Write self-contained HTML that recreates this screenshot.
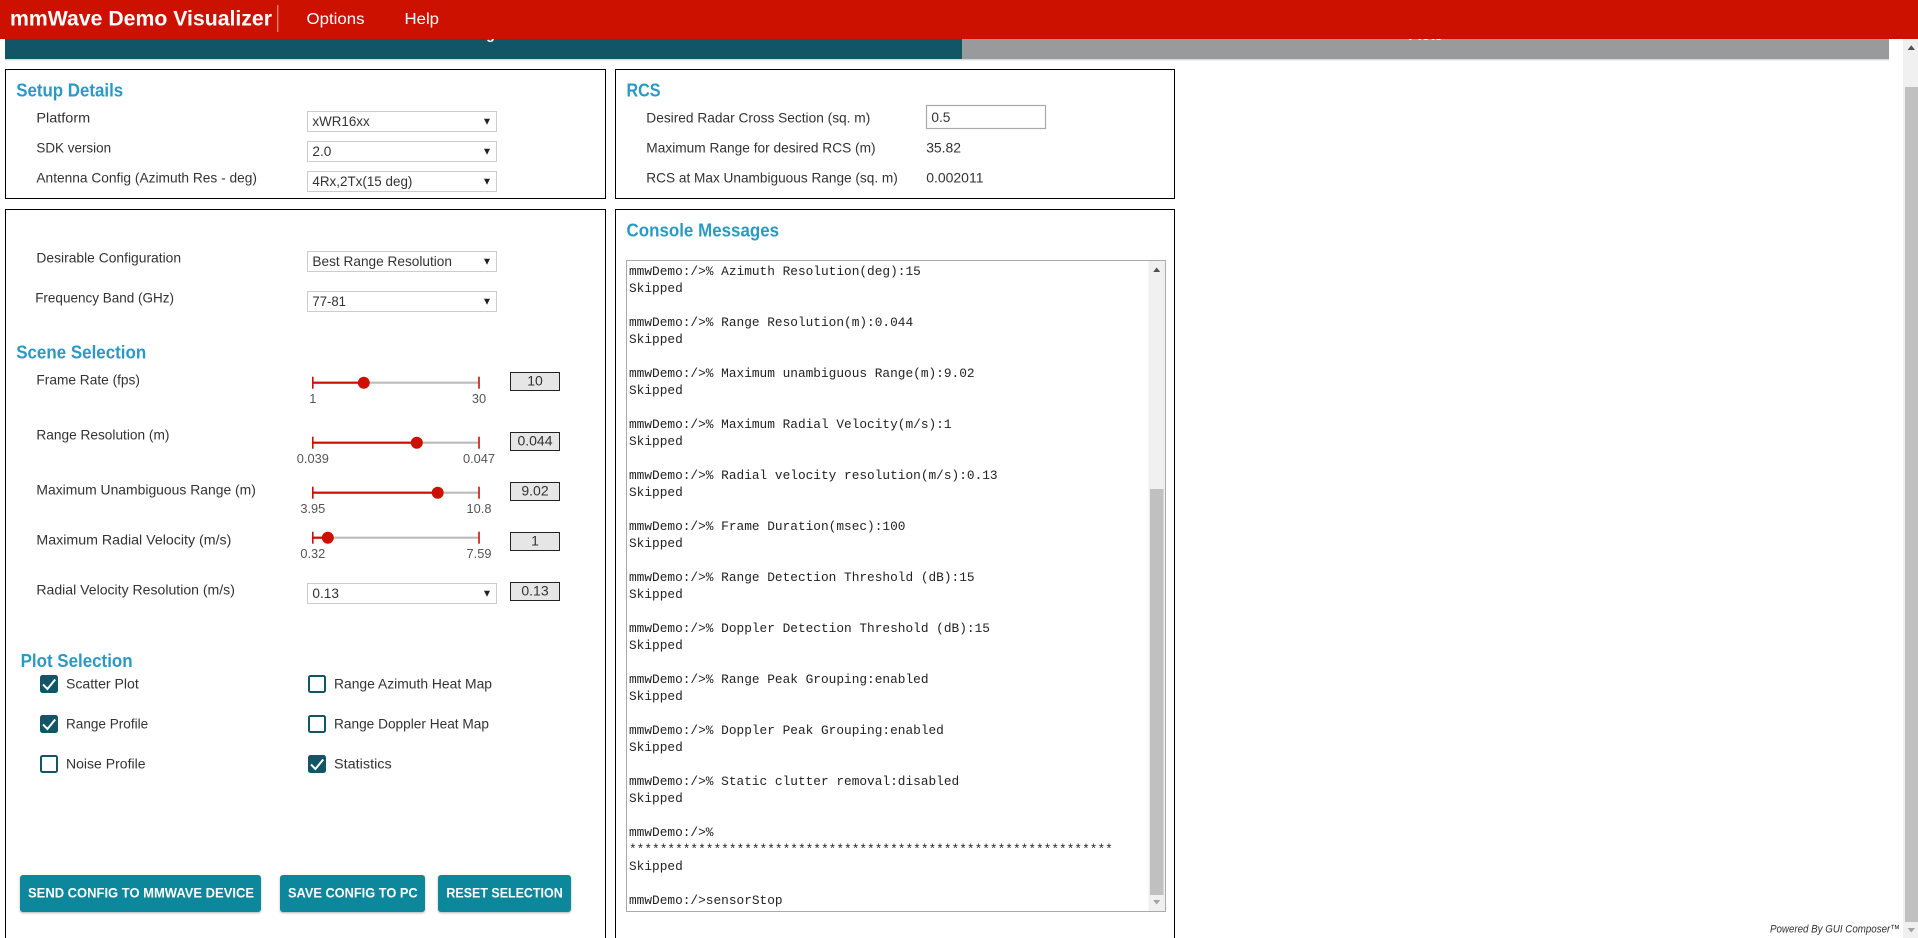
<!DOCTYPE html>
<html lang="en">
<head>
<meta charset="utf-8">
<title>mmWave Demo Visualizer</title>
<style>
html,body{margin:0;padding:0;background:#fff;width:1918px;height:938px;overflow:hidden}
svg{display:block;position:absolute;left:0;top:0}
text{font-family:"Liberation Sans",Arial,sans-serif;fill:#333}
.l{font-size:14px;transform:translateY(-1px)}
.o{font-size:14px}
.h{font-size:18px;font-weight:bold;fill:#2a9ac4}
.t{font-size:12.8px;fill:#555;text-anchor:middle;transform:translateY(-1px)}
.v{font-size:14px;text-anchor:middle}
.m{font-family:"Liberation Mono",monospace;font-size:12.8px;fill:#222;transform:translateY(-1px)}
.b{font-size:14px;font-weight:bold;fill:#fff}
.bt{font-size:14px;font-weight:bold;fill:#fff;transform:translateY(-1px)}
.s{fill:#fff;stroke:#ccc;stroke-width:1}
.p{fill:none;stroke:#000;stroke-width:1}
.vb{fill:#e6e6e6;stroke:#222;stroke-width:1}
.a{fill:#222;transform:translateY(.7px)}
.red{stroke:#cc1100;stroke-width:2.2}
.gr{stroke:#bbb;stroke-width:2.2}
.tk{stroke:#cc1100;stroke-width:1.6}
.cb{fill:#fff;stroke:#115566;stroke-width:2}
.cf{fill:#115566;stroke:#115566;stroke-width:2}
.ck{fill:none;stroke:#fff;stroke-width:2}
.btn{fill:#07879b}
</style>
</head>
<body>
<svg width="1918" height="938" viewBox="0 0 1918 938" xmlns="http://www.w3.org/2000/svg">
<defs>
<filter id="sh" x="-5%" y="-10%" width="110%" height="130%"><feDropShadow dx="0" dy="1" stdDeviation="1" flood-color="#000" flood-opacity="0.3"/></filter>
</defs>

<!-- tabs -->
<rect x="5" y="59" width="1884" height="1.5" fill="#dcdcdc"/>
<rect x="5" y="39" width="957" height="20" fill="#115566"/>
<rect x="962" y="39" width="927" height="20" fill="#999a9b"/>
<text x="483.5" y="39" class="b" text-anchor="middle">Configure</text>
<text x="1425.5" y="40" class="b" text-anchor="middle">Plots</text>

<!-- header -->
<rect x="0" y="0" width="1918" height="39" fill="#cc1100"/>
<text x="10" y="25.3" font-size="21" font-weight="bold" style="fill:#fff" textLength="262" lengthAdjust="spacingAndGlyphs">mmWave Demo Visualizer</text>
<rect x="277.3" y="5" width="1" height="27" fill="#e8a8a0"/>
<text x="306.5" y="24" font-size="16" style="fill:#fff" textLength="58" lengthAdjust="spacingAndGlyphs">Options</text>
<text x="404.5" y="24" font-size="16" style="fill:#fff" textLength="34.5" lengthAdjust="spacingAndGlyphs">Help</text>

<!-- page scrollbar -->
<rect x="1903" y="39" width="15" height="899" fill="#f0f0f0"/>
<rect x="1905" y="87" width="13" height="835" fill="#c0c0c0"/>
<polygon points="1911.3,45.3 1915,50 1907.6,50" fill="#505050"/>
<polygon points="1907.6,928 1915,928 1911.3,932.5" fill="#a3a3a3"/>
<text x="1770" y="932.3" font-size="11" font-style="italic" textLength="130" lengthAdjust="spacingAndGlyphs">Powered By GUI Composer™</text>

<!-- panels -->
<rect class="p" x="5.5" y="69.5" width="600" height="129"/>
<rect class="p" x="5.5" y="209.5" width="600" height="760"/>
<rect class="p" x="615.5" y="69.5" width="559" height="129"/>
<rect class="p" x="615.5" y="209.5" width="559" height="760"/>

<!-- setup details -->
<text class="h" x="16.2" y="96.3" textLength="107" lengthAdjust="spacingAndGlyphs">Setup Details</text>
<text class="l" x="36.4" y="123.3" textLength="53.8" lengthAdjust="spacingAndGlyphs">Platform</text>
<text class="l" x="36.4" y="153.3" textLength="74.7" lengthAdjust="spacingAndGlyphs">SDK version</text>
<text class="l" x="36.4" y="183.3" textLength="220.6" lengthAdjust="spacingAndGlyphs">Antenna Config (Azimuth Res - deg)</text>

<rect class="s" x="307.5" y="111.5" width="189" height="20"/>
<text class="o" x="312.4" y="126" textLength="57.3" lengthAdjust="spacingAndGlyphs">xWR16xx</text>
<polygon class="a" points="484,118 490,118 487,124"/>

<rect class="s" x="307.5" y="141.5" width="189" height="20"/>
<text class="o" x="312.4" y="156" textLength="19" lengthAdjust="spacingAndGlyphs">2.0</text>
<polygon class="a" points="484,148 490,148 487,154"/>

<rect class="s" x="307.5" y="171.5" width="189" height="20"/>
<text class="o" x="312.4" y="186" textLength="100" lengthAdjust="spacingAndGlyphs">4Rx,2Tx(15 deg)</text>
<polygon class="a" points="484,178 490,178 487,184"/>

<!-- config -->
<text class="l" x="36.4" y="263.3" textLength="144.7" lengthAdjust="spacingAndGlyphs">Desirable Configuration</text>
<rect class="s" x="307.5" y="251.5" width="189" height="20"/>
<text class="o" x="312.4" y="266" textLength="139.6" lengthAdjust="spacingAndGlyphs">Best Range Resolution</text>
<polygon class="a" points="484,258 490,258 487,264"/>

<text class="l" x="35.2" y="303.3" textLength="138.8" lengthAdjust="spacingAndGlyphs">Frequency Band (GHz)</text>
<rect class="s" x="307.5" y="291.5" width="189" height="20"/>
<text class="o" x="312.4" y="306" textLength="33.6" lengthAdjust="spacingAndGlyphs">77-81</text>
<polygon class="a" points="484,298 490,298 487,304"/>

<!-- scene selection -->
<text class="h" x="16.2" y="358.3" textLength="130" lengthAdjust="spacingAndGlyphs">Scene Selection</text>

<text class="l" x="36.4" y="385.3" textLength="103.6" lengthAdjust="spacingAndGlyphs">Frame Rate (fps)</text>
<line class="gr" x1="312.4" y1="382.7" x2="479.2" y2="382.7"/>
<line class="red" x1="312.4" y1="382.7" x2="363.8" y2="382.7"/>
<line class="tk" x1="312.8" y1="376.7" x2="312.8" y2="388.7"/>
<line class="tk" x1="479" y1="376.7" x2="479" y2="388.7"/>
<circle cx="363.8" cy="382.7" r="6" fill="#cc1100"/>
<text class="t" x="312.8" y="404">1</text>
<text class="t" x="479" y="404">30</text>
<rect class="vb" x="510.5" y="372.5" width="49" height="18"/>
<text class="v" x="535" y="385.7">10</text>

<text class="l" x="36.4" y="440.3" textLength="133" lengthAdjust="spacingAndGlyphs">Range Resolution (m)</text>
<line class="gr" x1="312.4" y1="442.7" x2="479.2" y2="442.7"/>
<line class="red" x1="312.4" y1="442.7" x2="416.8" y2="442.7"/>
<line class="tk" x1="312.8" y1="436.7" x2="312.8" y2="448.7"/>
<line class="tk" x1="479" y1="436.7" x2="479" y2="448.7"/>
<circle cx="416.8" cy="442.7" r="6" fill="#cc1100"/>
<text class="t" x="312.8" y="464">0.039</text>
<text class="t" x="479" y="464">0.047</text>
<rect class="vb" x="510.5" y="432.5" width="49" height="18"/>
<text class="v" x="535" y="445.7">0.044</text>

<text class="l" x="36.4" y="495.3" textLength="219.5" lengthAdjust="spacingAndGlyphs">Maximum Unambiguous Range (m)</text>
<line class="gr" x1="312.4" y1="492.7" x2="479.2" y2="492.7"/>
<line class="red" x1="312.4" y1="492.7" x2="437.7" y2="492.7"/>
<line class="tk" x1="312.8" y1="486.7" x2="312.8" y2="498.7"/>
<line class="tk" x1="479" y1="486.7" x2="479" y2="498.7"/>
<circle cx="437.7" cy="492.7" r="6" fill="#cc1100"/>
<text class="t" x="312.8" y="514">3.95</text>
<text class="t" x="479" y="514">10.8</text>
<rect class="vb" x="510.5" y="482.5" width="49" height="18"/>
<text class="v" x="535" y="495.7">9.02</text>

<text class="l" x="36.4" y="545.3" textLength="195" lengthAdjust="spacingAndGlyphs">Maximum Radial Velocity (m/s)</text>
<line class="gr" x1="312.4" y1="537.7" x2="479.2" y2="537.7"/>
<line class="red" x1="312.4" y1="537.7" x2="327.8" y2="537.7"/>
<line class="tk" x1="312.8" y1="531.7" x2="312.8" y2="543.7"/>
<line class="tk" x1="479" y1="531.7" x2="479" y2="543.7"/>
<circle cx="327.8" cy="537.7" r="6" fill="#cc1100"/>
<text class="t" x="312.8" y="559">0.32</text>
<text class="t" x="479" y="559">7.59</text>
<rect class="vb" x="510.5" y="532.5" width="49" height="18"/>
<text class="v" x="535" y="545.7">1</text>

<text class="l" x="36.4" y="595.3" textLength="198.5" lengthAdjust="spacingAndGlyphs">Radial Velocity Resolution (m/s)</text>
<rect class="s" x="307.5" y="583.5" width="189" height="20"/>
<text class="o" x="312.4" y="598" textLength="26.5" lengthAdjust="spacingAndGlyphs">0.13</text>
<polygon class="a" points="484,590 490,590 487,596"/>
<rect class="vb" x="510.5" y="582.5" width="49" height="18"/>
<text class="v" x="535" y="595.7">0.13</text>

<!-- plot selection -->
<text class="h" x="20.6" y="667" textLength="112" lengthAdjust="spacingAndGlyphs">Plot Selection</text>

<rect class="cf" x="41" y="676" width="16" height="16" rx="1.5"/>
<path class="ck" d="M43 684.5 L47.4 689 L55.2 679.5"/>
<text class="l" x="66" y="689.3" textLength="72.8" lengthAdjust="spacingAndGlyphs">Scatter Plot</text>

<rect class="cf" x="41" y="716" width="16" height="16" rx="1.5"/>
<path class="ck" d="M43 724.5 L47.4 729 L55.2 719.5"/>
<text class="l" x="66" y="729.3" textLength="82.2" lengthAdjust="spacingAndGlyphs">Range Profile</text>

<rect class="cb" x="41" y="756" width="16" height="16" rx="1.5"/>
<text class="l" x="66" y="769.3" textLength="79.5" lengthAdjust="spacingAndGlyphs">Noise Profile</text>

<rect class="cb" x="309" y="676" width="16" height="16" rx="1.5"/>
<text class="l" x="334" y="689.3" textLength="158" lengthAdjust="spacingAndGlyphs">Range Azimuth Heat Map</text>

<rect class="cb" x="309" y="716" width="16" height="16" rx="1.5"/>
<text class="l" x="334" y="729.3" textLength="155" lengthAdjust="spacingAndGlyphs">Range Doppler Heat Map</text>

<rect class="cf" x="309" y="756" width="16" height="16" rx="1.5"/>
<path class="ck" d="M311 764.5 L315.4 769 L323.2 759.5"/>
<text class="l" x="334" y="769.3" textLength="57.7" lengthAdjust="spacingAndGlyphs">Statistics</text>

<!-- buttons -->
<rect class="btn" x="20" y="875" width="241" height="37" rx="3" filter="url(#sh)"/>
<text class="bt" x="28" y="898.3" textLength="226" lengthAdjust="spacingAndGlyphs">SEND CONFIG TO MMWAVE DEVICE</text>
<rect class="btn" x="280" y="875" width="145" height="37" rx="3" filter="url(#sh)"/>
<text class="bt" x="288" y="898.3" textLength="129.6" lengthAdjust="spacingAndGlyphs">SAVE CONFIG TO PC</text>
<rect class="btn" x="438" y="875" width="133" height="37" rx="3" filter="url(#sh)"/>
<text class="bt" x="446.4" y="898.3" textLength="116.3" lengthAdjust="spacingAndGlyphs">RESET SELECTION</text>

<!-- RCS -->
<text class="h" x="626.5" y="96.3" textLength="34" lengthAdjust="spacingAndGlyphs">RCS</text>
<text class="l" x="646.3" y="123.3" textLength="224" lengthAdjust="spacingAndGlyphs">Desired Radar Cross Section (sq. m)</text>
<text class="l" x="646.3" y="153.3" textLength="229.3" lengthAdjust="spacingAndGlyphs">Maximum Range for desired RCS (m)</text>
<text class="l" x="646.3" y="183.3" textLength="251.5" lengthAdjust="spacingAndGlyphs">RCS at Max Unambiguous Range (sq. m)</text>
<rect x="926.5" y="105.5" width="119" height="23" fill="#fff" stroke="#aaa" stroke-width="1.2"/>
<text class="o" x="931.4" y="122" textLength="19" lengthAdjust="spacingAndGlyphs">0.5</text>
<text class="l" x="926.2" y="153.3" textLength="34.8" lengthAdjust="spacingAndGlyphs">35.82</text>
<text class="l" x="926.2" y="183.3" textLength="57.3" lengthAdjust="spacingAndGlyphs">0.002011</text>

<!-- console -->
<text class="h" x="626.5" y="236.7" textLength="152.6" lengthAdjust="spacingAndGlyphs">Console Messages</text>
<rect x="626.5" y="260.5" width="539" height="651" fill="#fff" stroke="#aaa" stroke-width="1"/>
<rect x="1148.4" y="261" width="16.6" height="650" fill="#f0f0f0"/>
<rect x="1150" y="489" width="13.5" height="406" fill="#c0c0c0"/>
<polygon points="1156.7,267.5 1160.2,272 1153.2,272" fill="#505050"/>
<polygon points="1153.2,900 1160.2,900 1156.7,904.5" fill="#a3a3a3"/>

<text class="m" x="629" y="276">mmwDemo:/&gt;% Azimuth Resolution(deg):15</text>
<text class="m" x="629" y="293">Skipped</text>
<text class="m" x="629" y="327">mmwDemo:/&gt;% Range Resolution(m):0.044</text>
<text class="m" x="629" y="344">Skipped</text>
<text class="m" x="629" y="378">mmwDemo:/&gt;% Maximum unambiguous Range(m):9.02</text>
<text class="m" x="629" y="395">Skipped</text>
<text class="m" x="629" y="429">mmwDemo:/&gt;% Maximum Radial Velocity(m/s):1</text>
<text class="m" x="629" y="446">Skipped</text>
<text class="m" x="629" y="480">mmwDemo:/&gt;% Radial velocity resolution(m/s):0.13</text>
<text class="m" x="629" y="497">Skipped</text>
<text class="m" x="629" y="531">mmwDemo:/&gt;% Frame Duration(msec):100</text>
<text class="m" x="629" y="548">Skipped</text>
<text class="m" x="629" y="582">mmwDemo:/&gt;% Range Detection Threshold (dB):15</text>
<text class="m" x="629" y="599">Skipped</text>
<text class="m" x="629" y="633">mmwDemo:/&gt;% Doppler Detection Threshold (dB):15</text>
<text class="m" x="629" y="650">Skipped</text>
<text class="m" x="629" y="684">mmwDemo:/&gt;% Range Peak Grouping:enabled</text>
<text class="m" x="629" y="701">Skipped</text>
<text class="m" x="629" y="735">mmwDemo:/&gt;% Doppler Peak Grouping:enabled</text>
<text class="m" x="629" y="752">Skipped</text>
<text class="m" x="629" y="786">mmwDemo:/&gt;% Static clutter removal:disabled</text>
<text class="m" x="629" y="803">Skipped</text>
<text class="m" x="629" y="837">mmwDemo:/&gt;%</text>
<text class="m" x="629" y="854">***************************************************************</text>
<text class="m" x="629" y="871">Skipped</text>
<text class="m" x="629" y="905">mmwDemo:/&gt;sensorStop</text>
</svg>
</body>
</html>
